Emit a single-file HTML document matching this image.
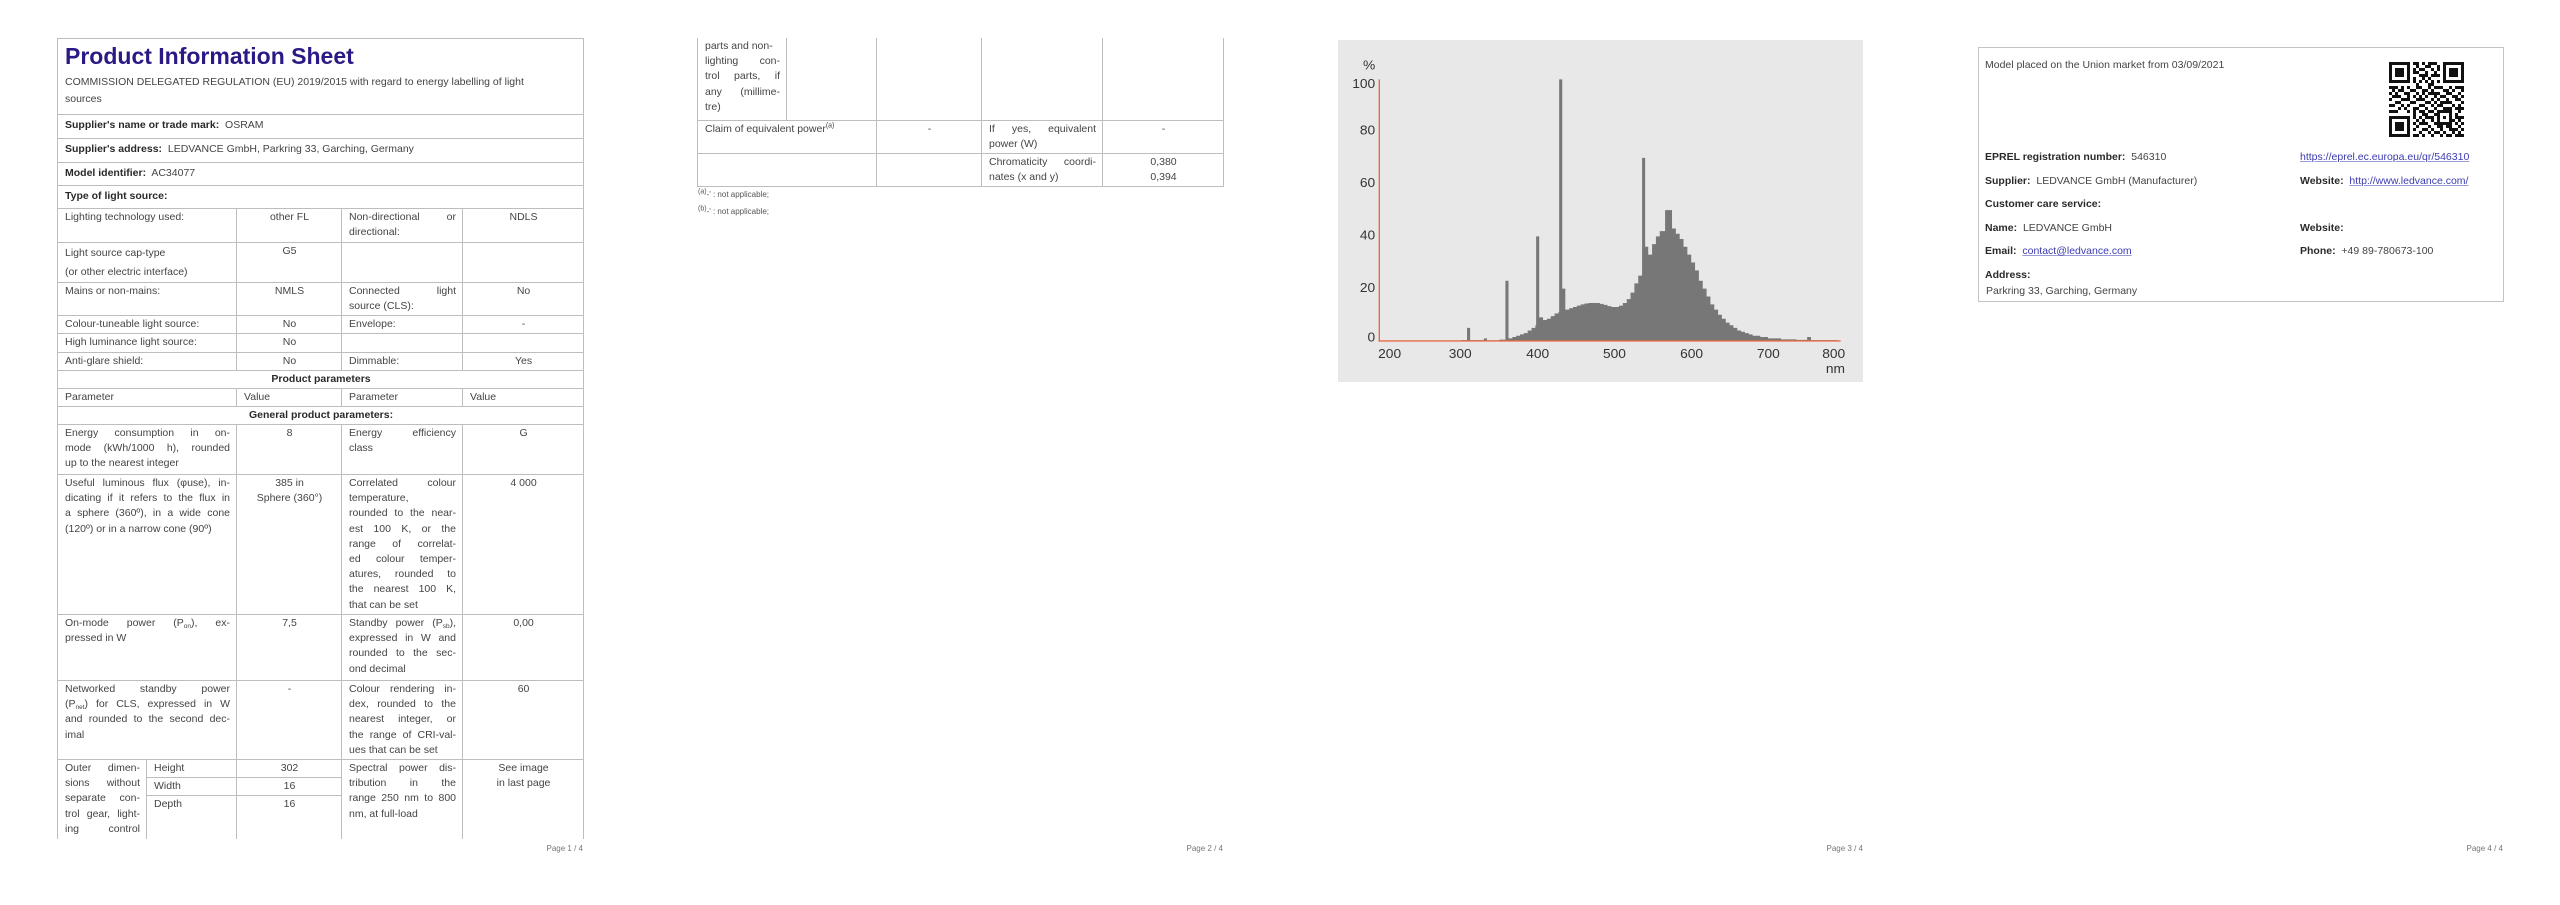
<!DOCTYPE html>
<html><head><meta charset="utf-8">
<style>
*{margin:0;padding:0;box-sizing:border-box}
body{width:2560px;height:905px;background:#fff;position:relative;overflow:hidden;font-family:"Liberation Sans",sans-serif;color:#444;font-size:10.5px}
table{border-collapse:collapse;table-layout:fixed;position:absolute}
td{border:1px solid #bdbdbd;vertical-align:top;padding:1px 6px 0 7px;line-height:15.2px;overflow:hidden;white-space:nowrap}
.c{text-align:center}
.b{font-weight:bold;color:#2a2a2a}
.j{text-align:justify;text-align-last:justify}
.pg{position:absolute;top:844px;font-size:8px;color:#777;text-align:right;width:100px}
sub{font-size:6.5px;vertical-align:-2px;line-height:0}
sup{font-size:7px;line-height:0}
.box{position:absolute;border:1px solid #c4c4c4}
.t{position:absolute;white-space:nowrap;font-size:10.5px;line-height:14px}
a{color:#3b3bb0;text-decoration:underline;text-decoration-color:#9a9ad8}
</style></head><body>

<!-- PAGE 1 -->
<table style="left:57px;top:38px;width:527px">
<colgroup><col style="width:89px"><col style="width:90px"><col style="width:105px"><col style="width:121px"><col style="width:121px"></colgroup>
<tr style="height:76px"><td colspan="5">
<div style="font-size:23px;font-weight:bold;color:#2b1a85;line-height:26px;padding-top:3px">Product Information Sheet</div>
<div style="line-height:16.5px;padding-top:5px">COMMISSION DELEGATED REGULATION (EU) 2019/2015 with regard to energy labelling of light<br>sources</div></td></tr>
<tr style="height:24px"><td colspan="5" style="padding-top:3px"><span class="b">Supplier's name or trade mark:</span>&nbsp; OSRAM</td></tr>
<tr style="height:24px"><td colspan="5" style="padding-top:3px"><span class="b">Supplier's address:</span>&nbsp; LEDVANCE GmbH, Parkring 33, Garching, Germany</td></tr>
<tr style="height:23px"><td colspan="5" style="padding-top:3px"><span class="b">Model identifier:</span>&nbsp; AC34077</td></tr>
<tr style="height:23px"><td colspan="5" style="padding-top:3px"><span class="b">Type of light source:</span></td></tr>
<tr style="height:34px"><td colspan="2">Lighting technology used:</td><td class="c">other FL</td><td><div class="j">Non-directional or</div><div>directional:</div></td><td class="c">NDLS</td></tr>
<tr style="height:39px"><td colspan="2" style="line-height:19px">Light source cap-type<br>(or other electric interface)</td><td class="c">G5</td><td></td><td></td></tr>
<tr style="height:33px"><td colspan="2">Mains or non-mains:</td><td class="c">NMLS</td><td><div class="j">Connected light</div><div>source (CLS):</div></td><td class="c">No</td></tr>
<tr style="height:18px"><td colspan="2">Colour-tuneable light source:</td><td class="c">No</td><td>Envelope:</td><td class="c">-</td></tr>
<tr style="height:19px"><td colspan="2">High luminance light source:</td><td class="c">No</td><td></td><td></td></tr>
<tr style="height:18px"><td colspan="2">Anti-glare shield:</td><td class="c">No</td><td>Dimmable:</td><td class="c">Yes</td></tr>
<tr style="height:18px"><td colspan="5" class="c b">Product parameters</td></tr>
<tr style="height:18px"><td colspan="2">Parameter</td><td>Value</td><td>Parameter</td><td>Value</td></tr>
<tr style="height:18px"><td colspan="5" class="c b">General product parameters:</td></tr>
<tr style="height:50px"><td colspan="2"><div class="j">Energy consumption in on-</div><div class="j">mode (kWh/1000 h), rounded</div><div>up to the nearest integer</div></td><td class="c">8</td><td><div class="j">Energy efficiency</div><div>class</div></td><td class="c">G</td></tr>
<tr style="height:140px"><td colspan="2"><div class="j">Useful luminous flux (φuse), in-</div><div class="j">dicating if it refers to the flux in</div><div class="j">a sphere (360º), in a wide cone</div><div>(120º) or in a narrow cone (90º)</div></td><td class="c">385 in<br>Sphere (360°)</td><td><div class="j">Correlated colour</div><div>temperature,</div><div class="j">rounded to the near-</div><div class="j">est 100 K, or the</div><div class="j">range of correlat-</div><div class="j">ed colour temper-</div><div class="j">atures, rounded to</div><div class="j">the nearest 100 K,</div><div>that can be set</div></td><td class="c">4 000</td></tr>
<tr style="height:66px"><td colspan="2"><div class="j">On-mode power (P<sub>on</sub>), ex-</div><div>pressed in W</div></td><td class="c">7,5</td><td><div class="j">Standby power (P<sub>sb</sub>),</div><div class="j">expressed in W and</div><div class="j">rounded to the sec-</div><div>ond decimal</div></td><td class="c">0,00</td></tr>
<tr style="height:79px"><td colspan="2"><div class="j">Networked standby power</div><div class="j">(P<sub>net</sub>) for CLS, expressed in W</div><div class="j">and rounded to the second dec-</div><div>imal</div></td><td class="c">-</td><td><div class="j">Colour rendering in-</div><div class="j">dex, rounded to the</div><div class="j">nearest integer, or</div><div class="j">the range of CRI-val-</div><div>ues that can be set</div></td><td class="c">60</td></tr>
<tr style="height:18px"><td rowspan="3" style="border-bottom:none"><div class="j">Outer dimen-</div><div class="j">sions without</div><div class="j">separate con-</div><div class="j">trol gear, light-</div><div class="j">ing control</div></td><td>Height</td><td class="c">302</td><td rowspan="3" style="border-bottom:none"><div class="j">Spectral power dis-</div><div class="j">tribution in the</div><div class="j">range 250 nm to 800</div><div>nm, at full-load</div></td><td rowspan="3" class="c" style="border-bottom:none">See image<br>in last page</td></tr>
<tr style="height:18px"><td>Width</td><td class="c">16</td></tr>
<tr style="height:43px"><td style="border-bottom:none">Depth</td><td class="c" style="border-bottom:none">16</td></tr>
</table>
<div class="pg" style="left:483px">Page 1 / 4</div>

<!-- PAGE 2 -->
<table style="left:697px;top:38px;width:527px">
<colgroup><col style="width:89px"><col style="width:90px"><col style="width:105px"><col style="width:121px"><col style="width:121px"></colgroup>
<tr style="height:82px"><td style="border-top:none"><div>parts and non-</div><div class="j">lighting con-</div><div class="j">trol parts, if</div><div class="j">any (millime-</div><div>tre)</div></td><td style="border-top:none"></td><td style="border-top:none"></td><td style="border-top:none"></td><td style="border-top:none"></td></tr>
<tr style="height:33px"><td colspan="2">Claim of equivalent power<sup>(a)</sup></td><td class="c">-</td><td><div class="j">If yes, equivalent</div><div>power (W)</div></td><td class="c">-</td></tr>
<tr style="height:33px"><td colspan="2"></td><td></td><td><div class="j">Chromaticity coordi-</div><div>nates (x and y)</div></td><td class="c">0,380<br>0,394</td></tr>
</table>
<div class="t" style="left:698px;top:188px;font-size:8px;color:#555"><sup style="font-size:7px">(a)</sup>-' : not applicable;</div>
<div class="t" style="left:698px;top:205px;font-size:8px;color:#555"><sup style="font-size:7px">(b)</sup>-' : not applicable;</div>
<div class="pg" style="left:1123px">Page 2 / 4</div>

<!-- PAGE 3 -->
<svg style="position:absolute;left:1338px;top:40px" width="525" height="342" viewBox="20 30 1525 1025" preserveAspectRatio="none">
<rect x="20" y="30" width="1525" height="1025" fill="#e8e8e8"/>
<g transform="translate(-292 932) scale(2.23 -7.84)">
<path fill="#777" d="M300 0 V0.3 H308 V5 H312 V0.3 H330 V1 H334 V0.2 H350 V0.5 H358 V23 H362 V1 H367 V1.5 H372 V2 H377 V2.5 H382 V3 H387 V4 H392 V5 H397 V6 H398 V40 H402 V9 H407 V8 H412 V8.5 H417 V9.5 H422 V10.5 H427 V11 H428 V100 H432 V20 H436 V12 H441 V12.5 H446 V13 H451 V13.5 H456 V14 H461 V14.3 H466 V14.5 H481 V14.2 H486 V13.8 H491 V13.3 H496 V13 H506 V13.5 H511 V14.5 H516 V16 H521 V18.5 H526 V22 H531 V25 H536 V70 H540 V36 H544 V33 H549 V37 H554 V40 H559 V42 H566 V50 H575 V43 H580 V41 H585 V39 H590 V36 H595 V33 H600 V30 H605 V27 H610 V23 H615 V20 H620 V17 H625 V14 H630 V12 H635 V10 H640 V8.5 H645 V7 H650 V6 H655 V5 H660 V4 H665 V3.5 H670 V3 H675 V2.5 H680 V2 H690 V1.5 H700 V1 H717 V0.6 H737 V0.4 H751 V1.5 H756 V0.3 H790 V0 Z"/>
</g>
<line x1="140" y1="148" x2="140" y2="934" stroke="#ea6a44" stroke-width="4"/>
<line x1="138" y1="932" x2="1480" y2="932" stroke="#ea6a44" stroke-width="4"/>
<g font-family="Liberation Sans, sans-serif" font-size="40" fill="#333" text-anchor="end" dominant-baseline="central">
<text x="128" y="160">100</text><text x="128" y="300">80</text><text x="128" y="458">60</text><text x="128" y="615">40</text><text x="128" y="772">20</text><text x="128" y="920">0</text>
<text x="128" y="105">%</text>
</g>
<g font-family="Liberation Sans, sans-serif" font-size="40" fill="#333" text-anchor="middle" dominant-baseline="central">
<text x="170" y="970">200</text><text x="375" y="970">300</text><text x="600" y="970">400</text><text x="823" y="970">500</text><text x="1047" y="970">600</text><text x="1270" y="970">700</text><text x="1460" y="970">800</text><text x="1465" y="1015">nm</text>
</g>
</svg>
<div class="pg" style="left:1763px">Page 3 / 4</div>

<!-- PAGE 4 -->
<div class="box" style="left:1978px;top:47px;width:526px;height:255px"></div>
<div class="t" style="left:1985px;top:58px">Model placed on the Union market from 03/09/2021</div>
<svg style="position:absolute;left:2389px;top:62px" width="75" height="75" viewBox="0 0 25 25" shape-rendering="crispEdges">
<g fill="#111">
<path d="M0 0h7v7h-7zM1 1v5h5v-5zM2 2h3v3h-3z" fill-rule="evenodd"/>
<path d="M18 0h7v7h-7zM19 1v5h5v-5zM20 2h3v3h-3z" fill-rule="evenodd"/>
<path d="M0 18h7v7h-7zM1 19v5h5v-5zM2 20h3v3h-3z" fill-rule="evenodd"/>
<path d="M16 16h5v5h-5zM17 17v3h3v-3zM18 18h1v1h-1z" fill-rule="evenodd"/>
<path d="M8 0h2v1h-2zM11 0h1v1h-1zM13 0h3v1h-3zM9 1h1v1h-1zM12 1h2v1h-2zM16 1h1v1h-1zM8 2h1v1h-1zM10 2h2v1h-2zM14 2h1v1h-1zM16 2h1v1h-1zM8 3h2v1h-2zM12 3h1v1h-1zM15 3h1v1h-1zM10 4h3v1h-3zM14 4h3v1h-3zM8 5h1v1h-1zM11 5h1v1h-1zM13 5h1v1h-1zM8 6h1v1h-1zM10 6h1v1h-1zM12 6h1v1h-1zM14 6h1v1h-1zM16 6h1v1h-1zM9 7h1v1h-1zM13 7h2v1h-2z"/>
<path d="M0 8h3v1h-3zM4 8h1v1h-1zM6 8h1v1h-1zM9 8h2v1h-2zM13 8h1v1h-1zM15 8h3v1h-3zM20 8h1v1h-1zM22 8h3v1h-3zM1 9h1v1h-1zM3 9h2v1h-2zM7 9h2v1h-2zM11 9h2v1h-2zM14 9h1v1h-1zM18 9h2v1h-2zM21 9h1v1h-1zM24 9h1v1h-1zM0 10h1v1h-1zM2 10h1v1h-1zM5 10h2v1h-2zM9 10h1v1h-1zM11 10h1v1h-1zM13 10h4v1h-4zM19 10h2v1h-2zM23 10h1v1h-1zM1 11h3v1h-3zM6 11h1v1h-1zM8 11h1v1h-1zM10 11h1v1h-1zM12 11h1v1h-1zM15 11h1v1h-1zM17 11h2v1h-2zM21 11h2v1h-2zM24 11h1v1h-1z"/>
<path d="M0 12h1v1h-1zM4 12h3v1h-3zM9 12h3v1h-3zM14 12h1v1h-1zM16 12h1v1h-1zM19 12h1v1h-1zM22 12h2v1h-2zM2 13h2v1h-2zM7 13h2v1h-2zM12 13h2v1h-2zM15 13h1v1h-1zM17 13h4v1h-4zM24 13h1v1h-1zM0 14h2v1h-2zM4 14h1v1h-1zM6 14h1v1h-1zM10 14h2v1h-2zM14 14h1v1h-1zM16 14h2v1h-2zM21 14h1v1h-1zM23 14h1v1h-1zM3 15h1v1h-1zM5 15h1v1h-1zM8 15h2v1h-2zM12 15h1v1h-1zM15 15h1v1h-1zM18 15h3v1h-3zM22 15h3v1h-3zM0 16h3v1h-3zM6 16h1v1h-1zM8 16h1v1h-1zM10 16h2v1h-2zM13 16h2v1h-2zM23 16h1v1h-1z"/>
<path d="M8 17h1v1h-1zM11 17h2v1h-2zM15 17h1v1h-1zM22 17h1v1h-1zM8 18h1v1h-1zM10 18h1v1h-1zM12 18h3v1h-3zM22 18h3v1h-3zM9 19h1v1h-1zM11 19h1v1h-1zM14 19h1v1h-1zM21 19h1v1h-1zM23 19h1v1h-1zM8 20h1v1h-1zM10 20h3v1h-3zM15 20h1v1h-1zM22 20h1v1h-1zM24 20h1v1h-1zM9 21h1v1h-1zM13 21h1v1h-1zM16 21h2v1h-2zM19 21h2v1h-2zM23 21h1v1h-1zM8 22h1v1h-1zM11 22h2v1h-2zM14 22h1v1h-1zM17 22h1v1h-1zM20 22h3v1h-3zM24 22h1v1h-1zM10 23h1v1h-1zM13 23h1v1h-1zM15 23h2v1h-2zM18 23h1v1h-1zM21 23h1v1h-1zM23 23h1v1h-1zM8 24h2v1h-2zM11 24h1v1h-1zM14 24h1v1h-1zM17 24h1v1h-1zM19 24h2v1h-2zM22 24h3v1h-3z"/>
</g></svg>
<div class="t" style="left:1985px;top:150px"><span class="b">EPREL registration number:</span>&nbsp; 546310</div>
<div class="t" style="left:2300px;top:150px"><a>https://eprel.ec.europa.eu/qr/546310</a></div>
<div class="t" style="left:1985px;top:174px"><span class="b">Supplier:</span>&nbsp; LEDVANCE GmbH (Manufacturer)</div>
<div class="t" style="left:2300px;top:174px"><span class="b">Website:</span>&nbsp; <a>http://www.ledvance.com/</a></div>
<div class="t" style="left:1985px;top:197px"><span class="b">Customer care service:</span></div>
<div class="t" style="left:1985px;top:221px"><span class="b">Name:</span>&nbsp; LEDVANCE GmbH</div>
<div class="t" style="left:2300px;top:221px"><span class="b">Website:</span></div>
<div class="t" style="left:1985px;top:244px"><span class="b">Email:</span>&nbsp; <a>contact@ledvance.com</a></div>
<div class="t" style="left:2300px;top:244px"><span class="b">Phone:</span>&nbsp; +49 89-780673-100</div>
<div class="t" style="left:1985px;top:268px"><span class="b">Address:</span></div>
<div class="t" style="left:1986px;top:284px">Parkring 33, Garching, Germany</div>
<div class="pg" style="left:2403px">Page 4 / 4</div>
</body></html>
